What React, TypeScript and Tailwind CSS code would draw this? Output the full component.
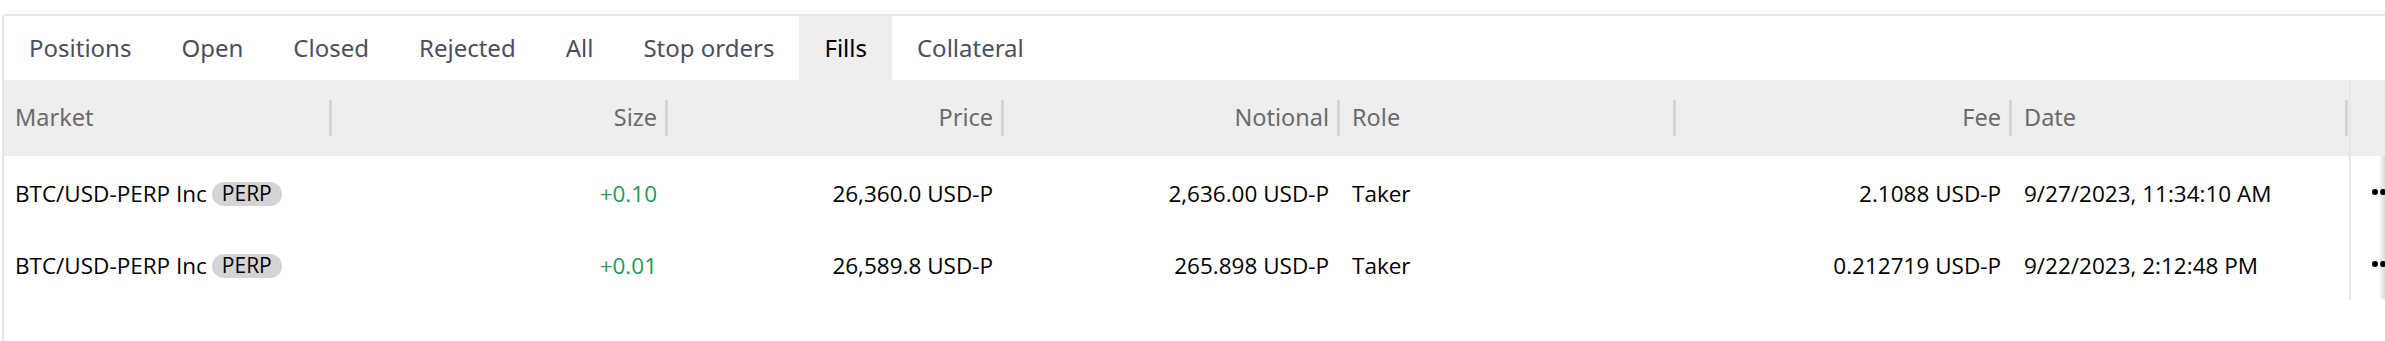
import React from 'react';

const tabs = ['Positions', 'Open', 'Closed', 'Rejected', 'All', 'Stop orders', 'Fills', 'Collateral'];

const columns = [
    { key: 'market', label: 'Market', align: 'left', w: 'w-[329px]' },
    { key: 'size', label: 'Size', align: 'right', w: 'w-[336px]' },
    { key: 'price', label: 'Price', align: 'right', w: 'w-[336px]' },
    { key: 'notional', label: 'Notional', align: 'right', w: 'w-[336px]' },
    { key: 'role', label: 'Role', align: 'left', w: 'w-[336px]' },
    { key: 'fee', label: 'Fee', align: 'right', w: 'w-[336px]' },
    { key: 'date', label: 'Date', align: 'left', w: 'w-[336px]' },
];

const fills = [
    { market: 'BTC/USD-PERP Inc', size: '+0.10', price: '26,360.0 USD-P', notional: '2,636.00 USD-P', role: 'Taker', fee: '2.1088 USD-P', date: '9/27/2023, 11:34:10 AM' },
    { market: 'BTC/USD-PERP Inc', size: '+0.01', price: '26,589.8 USD-P', notional: '265.898 USD-P', role: 'Taker', fee: '0.212719 USD-P', date: '9/22/2023, 2:12:48 PM' },
];

const headFont = { fontFamily: '"Noto Sans", Roboto, sans-serif' };
const cellFont = { fontFamily: '"Open Sans", "Noto Sans", sans-serif' };

export default function App() {
    return (
        <div className="relative w-[2385px] h-[341px] overflow-hidden bg-white pt-[14px] pl-[2px]">
            {/* right scroll shadow */}
            <div className="absolute right-0 top-[80px] h-[219px] w-[5px] bg-gradient-to-r from-[#f6f6f6] to-[#dcdcdc]" />

            <div className="relative w-[2520px] h-[327px] border-t-2 border-l-2 border-[#e6e6e6] rounded-tl-[4px] flex flex-col">
                {/* Tabs */}
                <div className="flex h-[64px] shrink-0 bg-white" style={headFont}>
                    {tabs.map((t) => (
                        <div
                            key={t}
                            className={`px-[25px] h-full flex items-center text-[24px] ${t === 'Fills' ? 'bg-[#eeeeee] text-black' : 'text-[#4b505a]'}`}
                        >
                            {t}
                        </div>
                    ))}
                </div>

                {/* Header */}
                <div className="flex h-[76px] shrink-0 bg-[#eeeeee] text-[#6b6b6b] text-[23.5px]" style={headFont}>
                    {columns.map((c) => (
                        <div
                            key={c.key}
                            className={`relative ${c.w} h-full flex items-center pl-[11px] pr-[12px] ${c.align === 'right' ? 'justify-end' : ''}`}
                        >
                            {c.label}
                            <span className="absolute right-[1px] top-[20px] w-[3px] h-[36px] bg-[#d4d4d4]" />
                        </div>
                    ))}
                    <div className="w-[120px] h-full border-l-2 border-[#e8e8e8]" />
                </div>

                {/* Rows */}
                {fills.map((f, i) => (
                    <div key={i} className="flex h-[72px] shrink-0 pt-[4px] text-[22.5px] text-black" style={cellFont}>
                        <div className="w-[329px] flex items-center pl-[11px] pr-[12px]">
                            <span>{f.market}</span>
                            <span className="ml-[5px] h-[24px] px-[10px] rounded-full bg-[#d4d4d4] text-[21px] text-black flex items-center">PERP</span>
                        </div>
                        <div className="w-[336px] flex items-center justify-end pl-[11px] pr-[12px] text-[#1d9a5c]">{f.size}</div>
                        <div className="w-[336px] flex items-center justify-end pl-[11px] pr-[12px]">{f.price}</div>
                        <div className="w-[336px] flex items-center justify-end pl-[11px] pr-[12px]">{f.notional}</div>
                        <div className="w-[336px] flex items-center pl-[11px] pr-[12px]">{f.role}</div>
                        <div className="w-[336px] flex items-center justify-end pl-[11px] pr-[12px]">{f.fee}</div>
                        <div className="w-[336px] flex items-center pl-[11px] pr-[12px]">{f.date}</div>
                        <div className="w-[120px] -mt-[4px] flex items-center gap-[2px] pl-[21px] border-l-2 border-[#e8e8e8]">
                            <span className="w-[6px] h-[6px] rounded-full bg-black" />
                            <span className="w-[6px] h-[6px] rounded-full bg-black" />
                            <span className="w-[6px] h-[6px] rounded-full bg-black" />
                        </div>
                    </div>
                ))}
            </div>
        </div>
    );
}
